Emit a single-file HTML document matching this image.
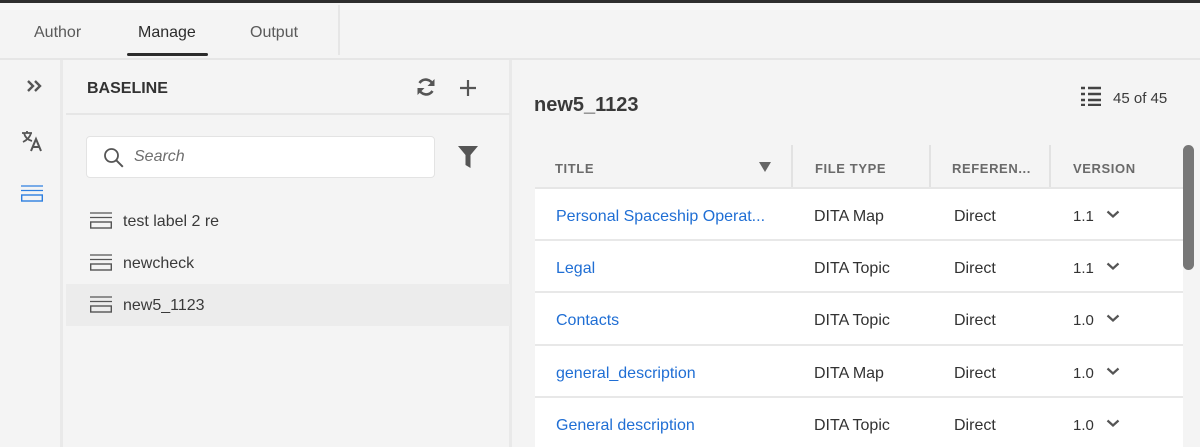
<!DOCTYPE html>
<html style="overflow:hidden;width:1200px;height:447px"><head><meta charset="utf-8"><style>
*{margin:0;padding:0;box-sizing:border-box}
body{width:1200px;height:447px;overflow:hidden;background:#f4f4f4;font-family:"Liberation Sans",sans-serif;color:#323232;position:relative}
.abs{position:absolute}
.top{left:0;top:0;width:1200px;height:3px;background:#2c2c2c}
.tabbar{left:0;top:3px;width:1200px;height:57px;background:#f4f4f4;border-bottom:2px solid #e6e6e6}
.tab{top:24px;font-size:16px;color:#5a5a5a}
.rail{left:0;top:60px;width:63px;height:387px;background:#f4f4f4;border-right:3px solid #e9e9e9}
.panel{left:66px;top:60px;width:446px;height:387px;background:#f4f4f4;border-right:3px solid #e9e9e9}
.right{left:512px;top:60px;width:688px;height:387px;background:#f4f4f4}
.item{left:66px;width:444px;height:42px;font-size:16px;color:#3a3a3a}
.item span{position:absolute;left:57px;top:13px}
.item svg{position:absolute;left:24px;top:12px}
.th{top:161px;font-size:13px;font-weight:bold;color:#6a6a6a;letter-spacing:.6px}
.vd{top:145px;width:2px;height:42px;background:#e2e2e2}
.row{left:535px;width:648px;height:52px;background:#fff;border-bottom:2px solid #e8e8e8;font-size:16px}
.row .t{position:absolute;left:21px;top:19px;color:#1f6ed4}
.row .f{position:absolute;left:279px;top:19px;color:#323232}
.row .r{position:absolute;left:419px;top:19px;color:#323232}
.row .v{position:absolute;left:538px;top:19px;font-size:15px;color:#323232}
.row svg{position:absolute;left:571px;top:21px}
</style></head><body>
<div class="abs top"></div>
<div class="abs tabbar"></div>
<div class="abs tab" style="left:34px">Author</div>
<div class="abs tab" style="left:138px;color:#2c2c2c">Manage</div>
<div class="abs" style="left:127px;top:53px;width:81px;height:3px;background:#2c2c2c;border-radius:2px"></div>
<div class="abs tab" style="left:250px">Output</div>
<div class="abs" style="left:338px;top:5px;width:2px;height:50px;background:#e6e6e6"></div>

<div class="abs rail"></div>
<svg class="abs" style="left:26px;top:79px" width="18" height="14" viewBox="0 0 18 14"><path d="M2 2l5 5-5 5M9 2l5 5-5 5" fill="none" stroke="#555" stroke-width="2.4"/></svg>
<svg class="abs" style="left:21px;top:130px" width="22" height="22" viewBox="0 0 22 22"><path d="M1 3h10M6 1v2M3 3c1 4 4 7 8 8M10 3c-1 4-4 7-8 9" fill="none" stroke="#555" stroke-width="1.8"/><path d="M10 21l5-12 5 12M12 17h6" fill="none" stroke="#555" stroke-width="2"/></svg>
<svg class="abs" style="left:21px;top:185px" width="22" height="18" viewBox="0 0 22 18"><path d="M0 1h22M0 5.5h22" stroke="#2d7fe0" stroke-width="1.3"/><rect x="0.7" y="10" width="20.6" height="6" fill="none" stroke="#2d7fe0" stroke-width="1.4"/></svg>

<div class="abs panel"></div>
<div class="abs" style="left:66px;top:113px;width:444px;height:2px;background:#e6e6e6"></div>
<div class="abs" style="left:87px;top:80px;font-size:16px;font-weight:bold;color:#323232">BASELINE</div>
<svg class="abs" style="left:415px;top:76px" width="22" height="22" viewBox="0 0 22 22"><path d="M18 9A7.5 7.5 0 0 0 4.5 7M4 13a7.5 7.5 0 0 0 13.5 2" fill="none" stroke="#555" stroke-width="2.6"/><path d="M19.5 3v7h-7zM2.5 19v-7h7z" fill="#555"/></svg>
<svg class="abs" style="left:459px;top:79px" width="18" height="18" viewBox="0 0 18 18"><path d="M9 1v16M1 9h16" stroke="#555" stroke-width="2.2"/></svg>
<div class="abs" style="left:86px;top:136px;width:349px;height:42px;background:#fff;border:1px solid #e3e3e3;border-radius:4px"></div>
<svg class="abs" style="left:103px;top:147px" width="22" height="22" viewBox="0 0 22 22"><circle cx="8.5" cy="8.5" r="6.5" fill="none" stroke="#555" stroke-width="1.8"/><path d="M13.3 13.3l6.5 6.5" stroke="#555" stroke-width="2"/></svg>
<div class="abs" style="left:134px;top:148px;font-size:16px;font-style:italic;color:#6e6e6e">Search</div>
<svg class="abs" style="left:457px;top:145px" width="22" height="24" viewBox="0 0 22 24"><path d="M1 1h20l-7.5 9v13l-5-3v-10z" fill="#555"/></svg>

<div class="abs item" style="top:200px"><svg width="22" height="18" viewBox="0 0 22 18"><path d="M0 1h22M0 5.5h22" stroke="#555" stroke-width="1.3"/><rect x="0.7" y="10" width="20.6" height="6" fill="none" stroke="#555" stroke-width="1.4"/></svg><span>test label 2 re</span></div>
<div class="abs item" style="top:242px"><svg width="22" height="18" viewBox="0 0 22 18"><path d="M0 1h22M0 5.5h22" stroke="#555" stroke-width="1.3"/><rect x="0.7" y="10" width="20.6" height="6" fill="none" stroke="#555" stroke-width="1.4"/></svg><span>newcheck</span></div>
<div class="abs item" style="top:284px;background:#ececec"><svg width="22" height="18" viewBox="0 0 22 18"><path d="M0 1h22M0 5.5h22" stroke="#555" stroke-width="1.3"/><rect x="0.7" y="10" width="20.6" height="6" fill="none" stroke="#555" stroke-width="1.4"/></svg><span>new5_1123</span></div>

<div class="abs right"></div>
<div class="abs" style="left:534px;top:94px;font-size:20px;font-weight:bold;color:#3a3a3a">new5_1123</div>
<svg class="abs" style="left:1081px;top:86px" width="20" height="20" viewBox="0 0 20 20"><path d="M0 2h4M7 2h13M0 8h4M7 8h13M0 14h4M7 14h13M0 19h4M7 19h13" stroke="#444" stroke-width="2.4"/></svg>
<div class="abs" style="left:1113px;top:90px;font-size:15px;color:#3a3a3a">45 of 45</div>

<div class="abs th" style="left:555px">TITLE</div>
<svg class="abs" style="left:758px;top:161px" width="14" height="12" viewBox="0 0 14 12"><path d="M1 1h12L7 11z" fill="#666"/></svg>
<div class="abs vd" style="left:791px"></div>
<div class="abs th" style="left:815px">FILE TYPE</div>
<div class="abs vd" style="left:929px"></div>
<div class="abs th" style="left:952px">REFEREN...</div>
<div class="abs vd" style="left:1049px"></div>
<div class="abs th" style="left:1073px">VERSION</div>
<div class="abs" style="left:535px;top:187px;width:648px;height:2px;background:#e6e6e6"></div>

<div class="abs row" style="top:189px"><span class="t">Personal Spaceship Operat...</span><span class="f">DITA Map</span><span class="r">Direct</span><span class="v">1.1</span><svg width="14" height="9" viewBox="0 0 14 9"><path d="M1.5 1.5l5.5 5 5.5-5" fill="none" stroke="#555" stroke-width="2.2"/></svg></div>
<div class="abs row" style="top:241px"><span class="t">Legal</span><span class="f">DITA Topic</span><span class="r">Direct</span><span class="v">1.1</span><svg width="14" height="9" viewBox="0 0 14 9"><path d="M1.5 1.5l5.5 5 5.5-5" fill="none" stroke="#555" stroke-width="2.2"/></svg></div>
<div class="abs row" style="top:293px;height:53px"><span class="t">Contacts</span><span class="f">DITA Topic</span><span class="r">Direct</span><span class="v">1.0</span><svg width="14" height="9" viewBox="0 0 14 9"><path d="M1.5 1.5l5.5 5 5.5-5" fill="none" stroke="#555" stroke-width="2.2"/></svg></div>
<div class="abs row" style="top:346px"><span class="t">general_description</span><span class="f">DITA Map</span><span class="r">Direct</span><span class="v">1.0</span><svg width="14" height="9" viewBox="0 0 14 9"><path d="M1.5 1.5l5.5 5 5.5-5" fill="none" stroke="#555" stroke-width="2.2"/></svg></div>
<div class="abs row" style="top:398px;height:49px;border-bottom:none"><span class="t">General description</span><span class="f">DITA Topic</span><span class="r">Direct</span><span class="v">1.0</span><svg width="14" height="9" viewBox="0 0 14 9"><path d="M1.5 1.5l5.5 5 5.5-5" fill="none" stroke="#555" stroke-width="2.2"/></svg></div>

<div class="abs" style="left:1183px;top:145px;width:11px;height:125px;background:#777;border-radius:6px"></div>
</body></html>
